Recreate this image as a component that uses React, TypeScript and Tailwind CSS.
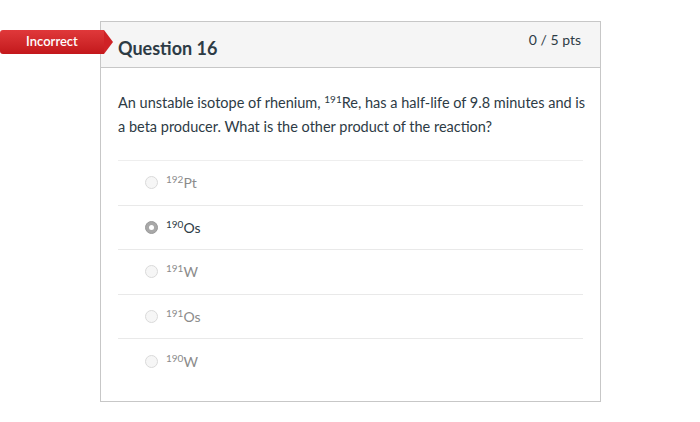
import React from 'react'

const OPTIONS = [
  { mass: '192', sym: 'Pt', selected: false },
  { mass: '190', sym: 'Os', selected: true },
  { mass: '191', sym: 'W', selected: false },
  { mass: '191', sym: 'Os', selected: false },
  { mass: '190', sym: 'W', selected: false },
]

const Radio = ({ selected }: { selected: boolean }) => (
  <span
    className={`inline-flex items-center justify-center w-[13px] h-[13px] rounded-full border ${
      selected ? 'border-[#9a9a9a] bg-[#a8a8a8]' : 'border-[#dadada] bg-[#f6f6f6]'
    }`}
  >
    {selected && <span className="w-[5px] h-[5px] rounded-full bg-white" />}
  </span>
)

export default function App() {
  return (
    <div className="relative w-[700px] h-[422px] bg-white" style={{ fontFamily: 'Lato, "Open Sans", sans-serif' }}>
      {/* badge */}
      <div className="absolute left-0 top-[30px] flex items-center">
        <div className="w-[104px] h-[24px] rounded-l-[3px] bg-gradient-to-b from-[#e0383a] to-[#c3171b] flex items-center justify-center text-white text-[13px] font-semibold">
          Incorrect
        </div>
        <div className="w-0 h-0 border-y-[12px] border-y-transparent border-l-[9px] border-l-[#cf2226]" />
      </div>

      <div className="pt-[21px] pl-[100px]">
        <div className="w-[501px] h-[381px] border border-[#c7c7c7] bg-white">
          <div className="h-[46px] bg-[#f5f5f5] border-b border-[#c7c7c7] flex justify-between pl-[17px] pr-[19px]">
            <h2 className="text-[18px] font-bold text-[#2d3b45] mt-[13px]">Question 16</h2>
            <span className="text-[14px] text-[#2d3b45] mt-[7px]">0 / 5 pts</span>
          </div>
          <div className="px-[17px] pt-[23px]">
            <p className="text-[14.5px] leading-[24px] text-[#2d3b45] whitespace-nowrap">
              An unstable isotope of rhenium, <sup className="text-[10px]">191</sup>Re, has a half-life of 9.8 minutes and is
              <br />
              a beta producer. What is the other product of the reaction?
            </p>
            <div className="mt-[21px] border-t border-[#eeeeee]">
              {OPTIONS.map((o, i) => (
                <div
                  key={i}
                  className={`h-[44.5px] flex items-center pl-[27px] gap-[8px] ${i < 4 ? 'border-b border-[#e9e9e9]' : ''} ${
                    o.selected ? 'text-[#2d3b45]' : 'text-[#8b8b8b]'
                  }`}
                >
                  <Radio selected={o.selected} />
                  <span className="text-[14px]">
                    <sup className="text-[10px]">{o.mass}</sup>
                    {o.sym}
                  </span>
                </div>
              ))}
            </div>
          </div>
        </div>
      </div>
    </div>
  )
}
